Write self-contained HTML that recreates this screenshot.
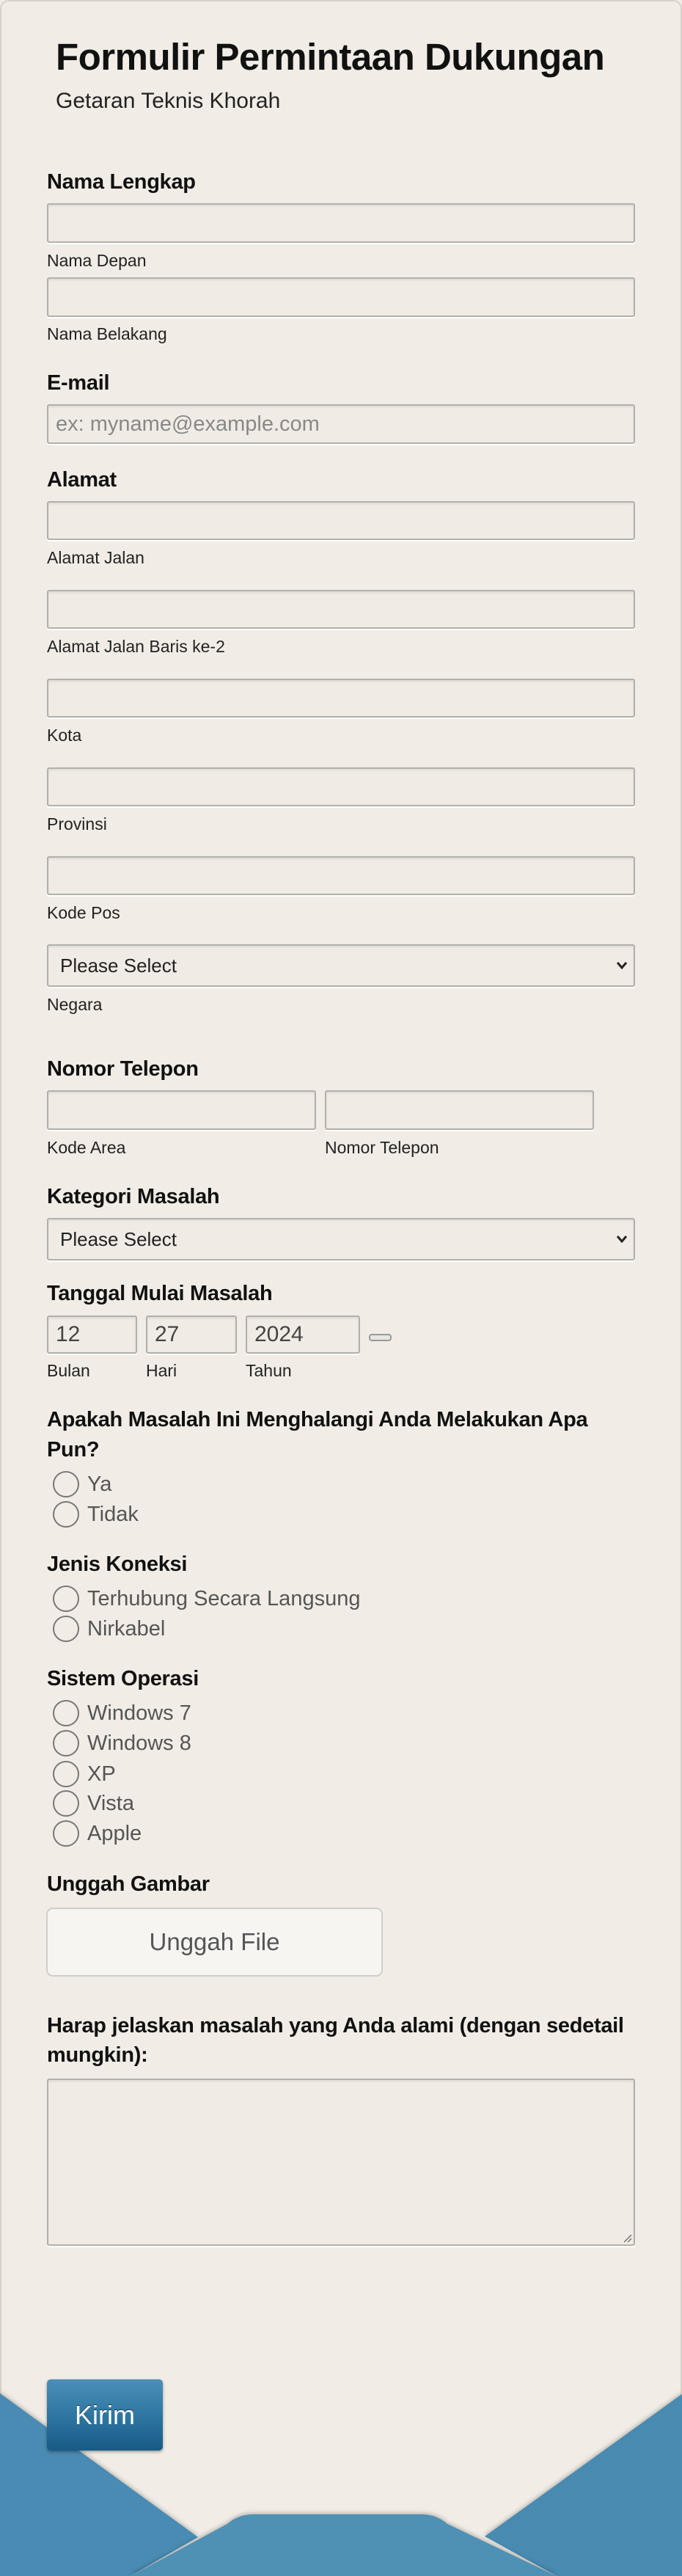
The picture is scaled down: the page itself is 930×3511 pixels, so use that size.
<!DOCTYPE html>
<html><head><meta charset="utf-8"><style>
*{margin:0;padding:0;box-sizing:border-box}
html,body{width:930px;height:3511px;overflow:hidden;background:#f1ede6}
body{position:relative;font-family:"Liberation Sans Narrow","Liberation Sans",sans-serif;color:#111}
.card{position:absolute;left:0;top:0;width:930px;height:3511px;border:2px solid #d6d2ca;border-radius:12px;background:#f1ede6}
.a{position:absolute;white-space:nowrap}
.t{left:76px;font-size:51px;font-weight:bold;line-height:60px;letter-spacing:-0.5px}
.st{left:76px;font-size:30px;line-height:36px;color:#222}
.l{left:64px;font-size:29px;font-weight:bold;line-height:40px;letter-spacing:-0.3px}
.s{left:64px;font-size:23px;line-height:28px;color:#222}
.i{position:absolute;background:#f0ece5;border:2px solid #b2b0ab;border-radius:3px;box-shadow:inset 0 2px 3px rgba(0,0,0,.08),0 2px 0 #fff;font-size:30px;color:#444;padding-left:10px;display:flex;align-items:center}
.sel{font-size:26px}
.r{position:absolute;left:72px;width:36px;height:36px;border:2px solid #777;border-radius:50%;background:#f1ede6}
.rt{left:119px;font-size:29px;line-height:36px;color:#555}
.chev{position:absolute;right:8px;top:50%;margin-top:-6px}
</style></head><body><div class="card"></div>
<div class="a t" style="top:48px">Formulir Permintaan Dukungan</div>
<div class="a st" style="top:120px">Getaran Teknis Khorah</div>

<div class="a l" style="top:228px">Nama Lengkap</div>
<div class="i" style="left:64px;top:277px;width:802px;height:54px"></div>
<div class="a s" style="top:341px">Nama Depan</div>
<div class="i" style="left:64px;top:378px;width:802px;height:54px"></div>
<div class="a s" style="top:441px">Nama Belakang</div>

<div class="a l" style="top:502px">E-mail</div>
<div class="i" style="left:64px;top:551px;width:802px;height:54px;color:#888;font-size:29px">ex: myname@example.com</div>

<div class="a l" style="top:634px">Alamat</div>
<div class="i" style="left:64px;top:683px;width:802px;height:53px"></div>
<div class="a s" style="top:746px">Alamat Jalan</div>
<div class="i" style="left:64px;top:804px;width:802px;height:53px"></div>
<div class="a s" style="top:867px">Alamat Jalan Baris ke-2</div>
<div class="i" style="left:64px;top:925px;width:802px;height:53px"></div>
<div class="a s" style="top:988px">Kota</div>
<div class="i" style="left:64px;top:1046px;width:802px;height:53px"></div>
<div class="a s" style="top:1109px">Provinsi</div>
<div class="i" style="left:64px;top:1167px;width:802px;height:53px"></div>
<div class="a s" style="top:1230px">Kode Pos</div>
<div class="i sel" style="left:64px;top:1287px;width:802px;height:58px;color:#222;padding-left:16px">Please Select<svg class="chev" width="16" height="12" viewBox="0 0 16 12"><path d="M2 2l6 7 6-7" fill="none" stroke="#222" stroke-width="3"/></svg></div>
<div class="a s" style="top:1355px">Negara</div>

<div class="a l" style="top:1437px">Nomor Telepon</div>
<div class="i" style="left:64px;top:1486px;width:367px;height:54px"></div>
<div class="i" style="left:443px;top:1486px;width:367px;height:54px"></div>
<div class="a s" style="top:1550px">Kode Area</div>
<div class="a s" style="top:1550px;left:443px">Nomor Telepon</div>

<div class="a l" style="top:1611px">Kategori Masalah</div>
<div class="i sel" style="left:64px;top:1660px;width:802px;height:58px;color:#222;padding-left:16px">Please Select<svg class="chev" width="16" height="12" viewBox="0 0 16 12"><path d="M2 2l6 7 6-7" fill="none" stroke="#222" stroke-width="3"/></svg></div>

<div class="a l" style="top:1743px">Tanggal Mulai Masalah</div>
<div class="i" style="left:64px;top:1793px;width:123px;height:52px">12</div>
<div class="i" style="left:199px;top:1793px;width:124px;height:52px">27</div>
<div class="i" style="left:335px;top:1793px;width:156px;height:52px">2024</div>
<div style="position:absolute;left:503px;top:1818px;width:31px;height:10px;border:2px solid #999;border-radius:4px;background:#e8e6e2"></div>
<div class="a s" style="top:1854px">Bulan</div>
<div class="a s" style="top:1854px;left:199px">Hari</div>
<div class="a s" style="top:1854px;left:335px">Tahun</div>

<div class="a l" style="top:1915px">Apakah Masalah Ini Menghalangi Anda Melakukan Apa</div>
<div class="a l" style="top:1956px">Pun?</div>
<div class="r" style="top:2005px"></div><div class="a rt" style="top:2005px">Ya</div>
<div class="r" style="top:2046px"></div><div class="a rt" style="top:2046px">Tidak</div>

<div class="a l" style="top:2112px">Jenis Koneksi</div>
<div class="r" style="top:2161px"></div><div class="a rt" style="top:2161px">Terhubung Secara Langsung</div>
<div class="r" style="top:2202px"></div><div class="a rt" style="top:2202px">Nirkabel</div>

<div class="a l" style="top:2268px">Sistem Operasi</div>
<div class="r" style="top:2317px"></div><div class="a rt" style="top:2317px">Windows 7</div>
<div class="r" style="top:2358px"></div><div class="a rt" style="top:2358px">Windows 8</div>
<div class="r" style="top:2400px"></div><div class="a rt" style="top:2400px">XP</div>
<div class="r" style="top:2440px"></div><div class="a rt" style="top:2440px">Vista</div>
<div class="r" style="top:2481px"></div><div class="a rt" style="top:2481px">Apple</div>

<div class="a l" style="top:2548px">Unggah Gambar</div>
<div style="position:absolute;left:63px;top:2600px;width:459px;height:94px;background:#f6f5f2;border:2px solid #d0ceca;border-radius:9px;display:flex;align-items:center;justify-content:center;font-size:33px;color:#555">Unggah File</div>

<div class="a l" style="top:2741px">Harap jelaskan masalah yang Anda alami (dengan sedetail</div>
<div class="a l" style="top:2781px">mungkin):</div>
<div class="i" style="left:64px;top:2833px;width:802px;height:228px"><svg style="position:absolute;right:2px;bottom:2px" width="12" height="12" viewBox="0 0 12 12"><path d="M11 1L1 11M11 6L6 11" stroke="#555" stroke-width="1.2"/></svg></div>

<svg style="position:absolute;left:0;top:3250px" width="930" height="261" viewBox="0 3250 930 261">
<defs><filter id="sh"><feDropShadow dx="0" dy="-2" stdDeviation="3" flood-color="#000" flood-opacity=".25"/></filter></defs>
<polygon points="0,3262 270,3458 178,3511 0,3511" fill="#4a8bb2" filter="url(#sh)"/>
<polygon points="930,3263 661,3457 759,3511 930,3511" fill="#4a8ab1" filter="url(#sh)"/>
<path d="M178,3511 L310,3440 Q325,3427 345,3427 L575,3427 Q595,3427 610,3440 L759,3511 Z" fill="#4f90b5" filter="url(#sh)"/>
</svg>
<div style="position:absolute;left:64px;top:3243px;width:158px;height:97px;border-radius:5px;background:linear-gradient(#4b8fb8,#2f77a2 50%,#175a86);box-shadow:0 2px 4px rgba(0,0,0,.35);display:flex;align-items:center;justify-content:center;color:#fff;font-size:36px;text-shadow:0 -1px 0 #123">Kirim</div>
</body></html>
